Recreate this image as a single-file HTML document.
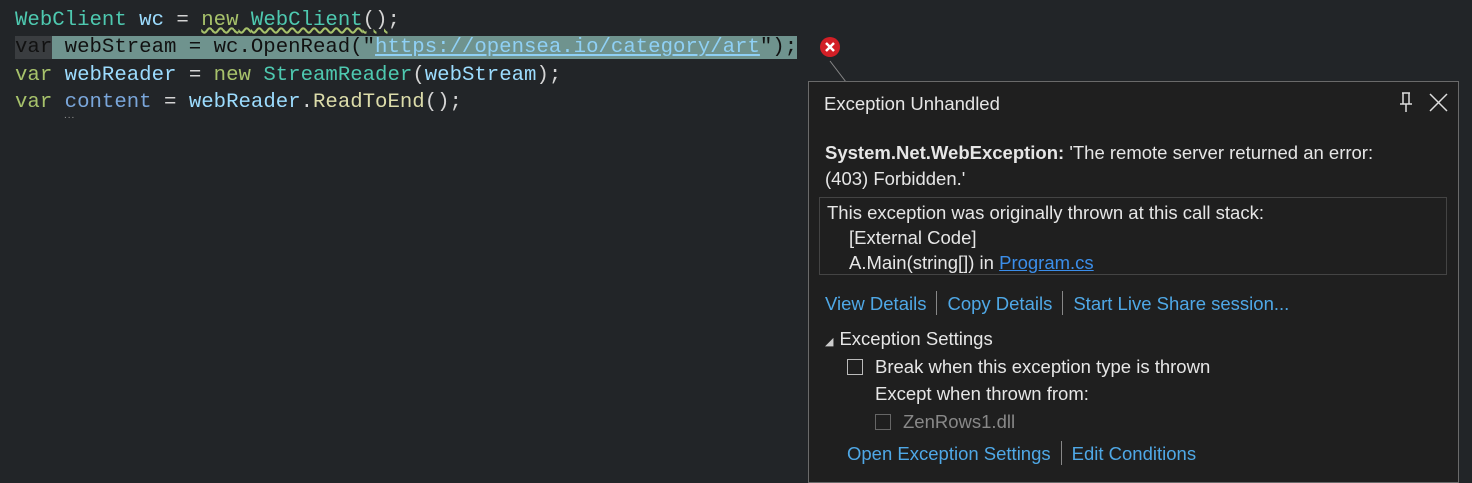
<!DOCTYPE html><html><head><style>
body{margin:0;width:1472px;height:463px;background:#222528;overflow:hidden;position:relative;font-family:"Liberation Sans",sans-serif}
.code{position:absolute;left:15px;top:7px;font-family:"Liberation Mono",monospace;font-size:20.7px;line-height:27.3px;color:#d4d4d4;white-space:pre;letter-spacing:0}
.t{color:#4ec9b0}.v{color:#9cdcfe}.k{color:#a7c26b}.m{color:#dcdcaa}.c{color:#7aa6da}
.hl{background:#6f938e;color:#111}.hl2{background:#3a3d40;color:#111}
.pop{position:absolute;left:808px;top:81px;width:649px;height:400px;background:#1f1f1f;border:1px solid #6a6a6a;color:#e6e6e6;font-size:18.5px}
.a{color:#4fa8e6}
.sep{display:inline-block;width:1px;height:24px;background:#888;vertical-align:-5px;margin:0 10px}
.cb{display:inline-block;width:14px;height:14px;border:1px solid #bbb;vertical-align:-2px;margin-right:12px}
</style></head><body>
<div class="code"><span class="t">WebClient</span> <span class="v">wc</span> = <span class="k" style="text-decoration:underline wavy #a7c26b">new</span><span style="text-decoration:underline wavy #a7c26b"> <span class="t">WebClient</span>()</span>;
<span class="hl2">var</span><span class="hl"> webStream = wc.OpenRead("<u style="color:#8fd0f5">https://opensea.io/category/art</u>");</span>
<span class="k">var</span> <span class="v">webReader</span> = <span class="k">new</span> <span class="t">StreamReader</span>(<span class="v">webStream</span>);
<span class="k">var</span> <span class="c">content</span> = <span class="v">webReader</span>.<span class="m">ReadToEnd</span>();</div>
<div style="position:absolute;left:64px;top:110px;color:#999;font-size:10px;letter-spacing:1px">...</div>
<svg style="position:absolute;left:818px;top:36px" width="50" height="50"><circle cx="12" cy="11" r="10" fill="#d21f26"/><path d="M8 7l8 8M16 7l-8 8" stroke="#fff" stroke-width="2.5"/><path d="M12 25 L28 46" stroke="#888" stroke-width="1" fill="none"/></svg>
<div class="pop">
<div style="position:absolute;left:15px;top:11px">Exception Unhandled</div>
<svg style="position:absolute;left:585px;top:8px" width="60" height="26"><path d="M8 3h8M9 3v11M15 3v11M6 14h12M12 14v8" stroke="#ddd" fill="none" stroke-width="1.5"/><path d="M36 4l17 17M53 4L36 21" stroke="#ddd" stroke-width="1.5"/></svg>
<div style="position:absolute;left:16px;top:58px;line-height:26px;width:620px"><b>System.Net.WebException:</b> 'The remote server returned an error:<br>(403) Forbidden.'</div>
<div style="position:absolute;left:10px;top:115px;width:628px;height:78px;border:1px solid #444;line-height:25px;padding-left:7px;box-sizing:border-box;padding-top:2px">This exception was originally thrown at this call stack:<br><span style="padding-left:22px">[External Code]</span><br><span style="padding-left:22px">A.Main(string[]) in <u style="color:#3b8eea">Program.cs</u></span></div>
<div style="position:absolute;left:16px;top:209px" class="a">View Details<span class="sep"></span>Copy Details<span class="sep"></span>Start Live Share session...</div>
<div style="position:absolute;left:16px;top:246px"><span style="font-size:11px;color:#ccc;margin-right:6px">◢</span>Exception Settings</div>
<div style="position:absolute;left:38px;top:274px"><span class="cb"></span>Break when this exception type is thrown</div>
<div style="position:absolute;left:66px;top:301px">Except when thrown from:</div>
<div style="position:absolute;left:66px;top:329px;color:#888"><span class="cb" style="border-color:#666"></span>ZenRows1.dll</div>
<div style="position:absolute;left:38px;top:359px" class="a">Open Exception Settings<span class="sep"></span>Edit Conditions</div>
</div>
</body></html>
